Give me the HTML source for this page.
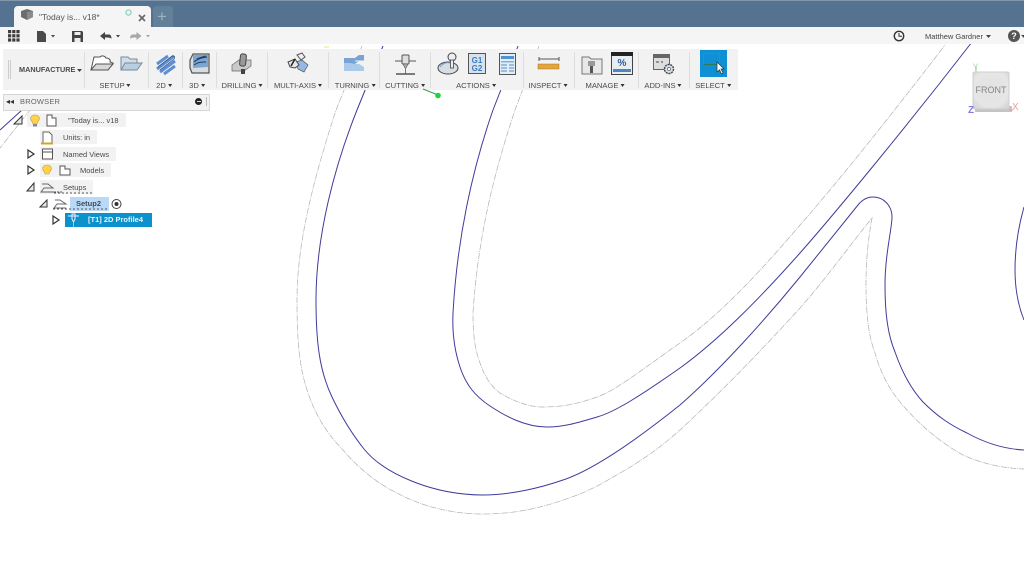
<!DOCTYPE html>
<html><head><meta charset="utf-8"><style>
html,body{margin:0;padding:0;background:#fff;}
#p{position:relative;width:1024px;height:566px;overflow:hidden;background:#fff;font-family:"Liberation Sans",sans-serif;color:#444;filter:blur(.3px);}
.a{position:absolute;}
.t{position:absolute;font-size:8px;line-height:10px;white-space:nowrap;color:#4a4a4a;}
.c{transform:translateX(-50%);font-size:7.6px;}
.c i{display:inline-block;width:0;height:0;border-left:2.2px solid transparent;border-right:2.2px solid transparent;border-top:3px solid #333;margin-left:2px;vertical-align:1.5px;}
.sep{position:absolute;top:52px;width:1px;height:36px;background:#dedede;}
.row{position:absolute;background:#f2f2f2;height:14px;}
svg{position:absolute;overflow:visible;}
</style></head><body><div id="p">

<svg style="left:0;top:0" width="1024" height="566" fill="none">
<g stroke="#3f3c9a" stroke-width="1">
<path d="M383,46 L357,110 C335,165 316,235 316,300 C316,340 319,370 332,397 C342,418 352,434 364,449 C385,475 435,495 483,495 C510,495 540,488 563,480 C590,471 630,445 680,405 C720,370 765,320 800,277 L858,205 C862,200 867,197 873,197 C884,197 892,206 892,217 C892,228 885,255 885,285 C885,315 888,335 895,352 C903,375 912,390 923,402 C937,416 950,425 967,433 C985,443 1005,449 1024,450"/>
<path d="M518,46 L493,110 C472,170 457,240 453,313 C452,335 455,352 460,367 C466,385 475,396 490,406 C505,416 525,427 547,427 C565,427 580,422 597,417 C615,412 640,396 680,368 C720,339 760,298 800,253 C830,219 900,135 972,42"/>
<path d="M1024,207 C1018,228 1015,250 1015,270 C1015,288 1018,305 1024,320"/>
</g>
<g stroke="#b4b4b4" stroke-width="0.75" stroke-dasharray="6 1 1 1">
<path d="M362,46 L336,110 C315,175 297,240 297,300 C297,345 300,368 307,390 C315,415 328,435 343,450 C360,470 380,485 397,493 C425,508 455,514 483,514 C515,514 540,508 563,500 C585,493 600,485 613,477 C640,462 660,448 680,430 C720,393 760,352 800,308 C825,280 850,245 872,218 C868,240 866,260 866,285 C866,310 868,335 875,353 C882,378 893,395 907,410 C925,430 945,445 963,455 C985,465 1005,468 1024,469"/>
<path d="M539,46 L515,110 C495,170 478,235 473,313 C473,340 476,352 480,363 C485,378 492,387 500,393 C515,402 530,407 543,407 C565,407 580,403 597,397 C615,391 640,371 680,343 C720,315 760,272 800,225 C825,197 880,130 945,45"/>
<path d="M30,110 L0,148"/>
</g>
<path d="M22,110 L0,130" stroke="#3f3c9a" stroke-width="1"/>
</svg>

<!-- title bar -->
<div class="a" style="left:0;top:0;width:1024px;height:27px;background:#557290;"></div>
<div class="a" style="left:0;top:0;width:1024px;height:1px;background:#8397ab;"></div>
<div class="a" style="left:153px;top:6px;width:20px;height:21px;background:#638099;border-radius:3px 3px 0 0;"></div>
<div class="t" style="left:157px;top:6px;font-size:17px;line-height:21px;color:#9db0c2;">+</div>
<div class="a" style="left:14px;top:6px;width:137px;height:21px;background:#f5f5f5;border-radius:4px 4px 0 0;"></div>
<svg style="left:20px;top:9px" width="16" height="14"><path d="M1,2 L7,0 L13,2 L13,8 L7,11 L1,8Z" fill="#6d6d6d"/><path d="M7,3 L13,2 L13,8 L7,11Z" fill="#8b8b8b"/></svg>
<div class="t" style="left:39px;top:12px;font-size:8.5px;color:#555;">"Today is... v18*</div>
<svg style="left:125px;top:9px" width="8" height="8"><circle cx="3.500" cy="3.500" r="2.600" fill="none" stroke="#7fc8b4"/></svg>
<svg style="left:138px;top:14px" width="8" height="8"><path d="M1,1 L7,7 M7,1 L1,7" stroke="#666" stroke-width="1.600"/></svg>

<!-- quick access -->
<div class="a" style="left:0;top:27px;width:1024px;height:17px;background:#f5f5f5;"></div>
<svg style="left:8px;top:30px" width="12" height="12" fill="#3d3d3d"><rect x="0" y="0" width="3.200" height="3.200"/><rect x="4.200" y="0" width="3.200" height="3.200"/><rect x="8.400" y="0" width="3.200" height="3.200"/><rect x="0" y="4.200" width="3.200" height="3.200"/><rect x="4.200" y="4.200" width="3.200" height="3.200"/><rect x="8.400" y="4.200" width="3.200" height="3.200"/><rect x="0" y="8.400" width="3.200" height="3.200"/><rect x="4.200" y="8.400" width="3.200" height="3.200"/><rect x="8.400" y="8.400" width="3.200" height="3.200"/></svg>
<svg style="left:37px;top:31px" width="20" height="12" fill="#4a4a4a"><path d="M0,0 H6 L9,3 V11 H0Z"/><path d="M14,4 H18 L16,6.500Z"/></svg>
<svg style="left:72px;top:31px" width="12" height="12"><path d="M0,0 H10 L11,1 V11 H0Z" fill="#444"/><rect x="2.500" y="1" width="6" height="3" fill="#eee"/><rect x="2.500" y="7" width="6" height="4" fill="#eee"/></svg>
<svg style="left:100px;top:32px" width="22" height="10"><path d="M0,4 L5,0 V2.500 H9 C10.500,2.500 11.500,4 11.500,7 C10.500,5.500 9,5.500 5,5.500 V8Z" fill="#444"/><path d="M16,3 H20 L18,5.500Z" fill="#444"/></svg>
<svg style="left:130px;top:32px" width="22" height="10"><path d="M11.500,4 L6.500,0 V2.500 H3 C1,2.500 0,4 0,7 C1,5.500 3,5.500 6.500,5.500 V8Z" fill="#a8a8a8"/><path d="M16,3 H20 L18,5.500Z" fill="#a8a8a8"/></svg>
<svg style="left:893px;top:30px" width="12" height="12" fill="none"><circle cx="6" cy="6" r="4.700" stroke="#333" stroke-width="1.400"/><path d="M6,3 V6.300 H9" stroke="#333"/></svg>
<div class="t" style="left:925px;top:32px;font-size:7.500px;color:#444;">Matthew Gardner</div>
<svg style="left:986px;top:35px" width="6" height="4"><path d="M0,0 H5 L2.500,3Z" fill="#444"/></svg>
<div class="a" style="left:1008px;top:30px;width:12px;height:12px;border-radius:50%;background:#555;color:#fff;font-size:9px;font-weight:bold;line-height:12px;text-align:center;">?</div>
<svg style="left:1021px;top:35px" width="3" height="4"><path d="M0,0 H3 V3Z" fill="#444"/></svg>

<!-- toolbar -->
<div class="a" style="left:3px;top:49px;width:735px;height:41px;background:#f2f2f2;"></div>
<div class="a" style="left:8px;top:60px;width:1px;height:19px;background:#ccc;"></div>
<div class="a" style="left:10px;top:60px;width:1px;height:19px;background:#ccc;"></div>
<div class="t" style="left:19px;top:65px;font-weight:bold;font-size:7.300px;color:#4a4a4a;">MANUFACTURE</div>
<svg style="left:77px;top:69px" width="5" height="4"><path d="M0,0 H5 L2.500,3Z" fill="#444"/></svg>

<div class="sep" style="left:84px"></div><div class="sep" style="left:148px"></div><div class="sep" style="left:182px"></div><div class="sep" style="left:216px"></div><div class="sep" style="left:267px"></div><div class="sep" style="left:328px"></div><div class="sep" style="left:379px"></div><div class="sep" style="left:430px"></div><div class="sep" style="left:523px"></div><div class="sep" style="left:574px"></div><div class="sep" style="left:638px"></div><div class="sep" style="left:689px"></div>

<div class="t c" style="left:115px;top:81px;">SETUP<i></i></div>
<div class="t c" style="left:164px;top:81px;">2D<i></i></div>
<div class="t c" style="left:197px;top:81px;">3D<i></i></div>
<div class="t c" style="left:242px;top:81px;">DRILLING<i></i></div>
<div class="t c" style="left:298px;top:81px;">MULTI-AXIS<i></i></div>
<div class="t c" style="left:355px;top:81px;">TURNING<i></i></div>
<div class="t c" style="left:405px;top:81px;">CUTTING<i></i></div>
<div class="t c" style="left:476px;top:81px;">ACTIONS<i></i></div>
<div class="t c" style="left:548px;top:81px;">INSPECT<i></i></div>
<div class="t c" style="left:605px;top:81px;">MANAGE<i></i></div>
<div class="t c" style="left:663px;top:81px;">ADD-INS<i></i></div>
<div class="t c" style="left:713px;top:81px;">SELECT<i></i></div>

<!-- setup icons -->
<svg style="left:90px;top:55px" width="24" height="17"><path d="M1,15 L4,2 H10 C12,0 15,1 16,3 C19,3 21,5 20,7 L23,8 L18,15Z" fill="#fff" stroke="#555"/><path d="M1,15 L6,9 H23 L18,15Z" fill="#d8d8d8" stroke="#555"/></svg>
<svg style="left:120px;top:56px" width="23" height="15"><path d="M1,14 V1 H8 L10,3 H17 V7" fill="#cfdeea" stroke="#7a8a98"/><path d="M1,14 L5,7 H22 L17,14Z" fill="#b8cfe2" stroke="#7a8a98"/></svg>
<!-- 2D -->
<svg style="left:155px;top:53px" width="22" height="22" fill="none"><path d="M2,11 L13,3 M2,16 L19,3 M5,19 L20,8 M9,21 L20,13" stroke="#5f8fd0" stroke-width="3"/><path d="M3,14 L16,4 C18,2 21,3 19,6 L5,17" stroke="#2c4f80" stroke-width=".7"/></svg>
<!-- 3D -->
<svg style="left:189px;top:53px" width="21" height="21"><path d="M4,1 H20 V20 H3 L1,15 V7Z" fill="#d8dde2" stroke="#555" stroke-width="1.200"/><path d="M4,2 H19 V14 L4,15Z" fill="#7aa6d0"/><path d="M5,9 C9,5 14,5 18,4 M5,12 C9,9 12,9 17,9 M8,6 C10,5 13,4 17,3" stroke="#1d3c6a" fill="none"/></svg>
<!-- drilling -->
<svg style="left:231px;top:53px" width="21" height="21"><path d="M1,12 L8,7 H20 V13 L13,18 H1Z" fill="#c9c9c9" stroke="#666" stroke-width=".7"/><rect x="9" y="1" width="6" height="12" rx="2" fill="#999" stroke="#444" transform="rotate(6 12 7)"/><rect x="10" y="16" width="4" height="5" fill="#444"/></svg>
<!-- multi axis -->
<svg style="left:287px;top:53px" width="22" height="20"><path d="M9,9 L15,7 L21,12 L17,19 L11,16Z" fill="#94b9e4" stroke="#555" stroke-width=".7"/><path d="M1,9 L8,6 L12,12 L8,15 L3,14Z" fill="#e6e6e6" stroke="#444"/><path d="M10,2 L15,0 L18,4 L14,7Z" fill="#eee" stroke="#555"/><path d="M8,6 L4,13" stroke="#222" stroke-width="1.500"/></svg>
<!-- turning -->
<svg style="left:344px;top:55px" width="21" height="16"><path d="M0,3 H11 L15,0 H20 V6 H15 L11,9 H6 L0,12Z" fill="#77a4d4"/><path d="M0,8 H6 L11,9 H15 L20,12 V16 H0Z" fill="#aacaea"/><path d="M11,6 L20,6" stroke="#eee"/></svg>
<!-- cutting -->
<svg style="left:394px;top:53px" width="23" height="23"><path d="M1,8 H22" stroke="#555"/><rect x="8" y="2" width="7" height="9" rx="1" fill="#ddd" stroke="#555"/><path d="M9,11 H14 L12,15 H11Z" fill="#aaa" stroke="#555" stroke-width=".6"/><path d="M11.500,15 V21" stroke="#d8503c"/><path d="M2,21 H21" stroke="#555" stroke-width="1.400"/></svg>
<!-- actions -->
<svg style="left:437px;top:52px" width="22" height="23"><ellipse cx="11" cy="16" rx="10" ry="6" fill="#d7dde5" stroke="#444" stroke-width="1"/><path d="M3,15 C6,11 10,10 13,11" stroke="#7aa0cc" fill="none"/><circle cx="15" cy="5" r="4" fill="#eee" stroke="#444"/><rect x="13.500" y="8" width="3" height="8" fill="#eee" stroke="#444" stroke-width=".8"/></svg>
<svg style="left:468px;top:53px" width="19" height="22"><rect x=".5" y=".5" width="17" height="20" fill="#d8e2ec" stroke="#555"/><text x="9" y="10" font-family="Liberation Sans,sans-serif" font-size="8" font-weight="bold" fill="#3a7bc0" text-anchor="middle">G1</text><text x="9" y="18" font-family="Liberation Sans,sans-serif" font-size="8" font-weight="bold" fill="#3a7bc0" text-anchor="middle">G2</text></svg>
<svg style="left:499px;top:53px" width="18" height="22"><rect x=".5" y=".5" width="16" height="21" fill="#e4edf5" stroke="#555"/><rect x="2" y="3" width="13" height="3" fill="#4e94d4"/><rect x="2" y="8" width="13" height="1.500" fill="#7fb2dd"/><path d="M2,12 H8 M10,12 H15 M2,15 H8 M10,15 H15 M2,18 H8 M10,18 H15" stroke="#6ea2cf" stroke-width="1.200"/></svg>
<!-- inspect -->
<svg style="left:538px;top:57px" width="22" height="14"><path d="M1,2 H21" stroke="#555"/><path d="M1,0 V4 M21,0 V4" stroke="#555"/><rect x="0" y="7" width="21" height="5" fill="#e2a63c" stroke="#a87820" stroke-width=".5"/></svg>
<!-- manage -->
<svg style="left:581px;top:54px" width="22" height="21"><path d="M1,20 V3 H8 L10,5 H21 V20Z" fill="#e8e8e8" stroke="#777"/><rect x="7" y="7" width="7" height="5" fill="#999"/><rect x="9" y="12" width="3" height="7" fill="#555"/></svg>
<svg style="left:611px;top:52px" width="22" height="23"><rect x=".5" y=".5" width="21" height="22" fill="#e8edf2" stroke="#444"/><rect x="0" y="0" width="22" height="4" fill="#222"/><rect x="2" y="17" width="18" height="3" fill="#4d86bf"/><text x="11" y="14" font-family="Liberation Sans,sans-serif" font-size="10" font-weight="bold" fill="#2a5d94" text-anchor="middle">%</text></svg>
<!-- addins -->
<svg style="left:653px;top:54px" width="22" height="21"><rect x=".5" y=".5" width="16" height="15" fill="#dedede" stroke="#666"/><rect x="1" y="1" width="15" height="3" fill="#666"/><path d="M3,8 H6 M8,8 H10" stroke="#444"/><circle cx="16" cy="15" r="4.500" fill="#d6e2ee" stroke="#444" stroke-width="1.400" stroke-dasharray="2 .8"/><circle cx="16" cy="15" r="1.600" fill="#fff" stroke="#444" stroke-width=".6"/></svg>
<!-- select -->
<div class="a" style="left:700px;top:50px;width:27px;height:27px;background:#0f8fd4;"></div>
<div class="a" style="left:703px;top:53px;width:15px;height:10px;border:1px solid #3f9a5c;border-bottom-color:#2d7a55;"></div>
<svg style="left:716px;top:62px" width="9" height="13"><path d="M1,0 V10 L3.500,7.800 L5.500,12 L7,11 L5,7 H8Z" fill="#fff" stroke="#333" stroke-width=".7"/></svg>

<!-- green pivot -->
<svg style="left:420px;top:88px" width="24" height="14"><path d="M3,1 L18,7" stroke="#2fa050"/><circle cx="18" cy="7.500" r="2.800" fill="#1fd23f"/></svg>
<div class="a" style="left:324px;top:46px;width:5px;height:2px;background:#f4f2c0;"></div>

<!-- browser -->
<div class="a" style="left:3px;top:94px;width:205px;height:15px;background:#f2f2f2;border:1px solid #d6d6d6;"></div>
<div class="t" style="left:6px;top:97px;font-size:8px;color:#333;">◂◂</div>
<div class="t" style="left:20px;top:97px;font-size:7.500px;letter-spacing:.2px;color:#666;">BROWSER</div>
<div class="a" style="left:195px;top:98px;width:7px;height:7px;border-radius:50%;background:#222;"></div>
<div class="a" style="left:196.5px;top:101px;width:4px;height:1px;background:#ddd;"></div>
<div class="a" style="left:206px;top:97px;width:1px;height:9px;background:#bbb;"></div>

<div class="row" style="left:27px;top:113px;width:99px;"></div>
<div class="row" style="left:40px;top:130px;width:57px;"></div>
<div class="row" style="left:40px;top:147px;width:76px;"></div>
<div class="row" style="left:40px;top:163px;width:71px;"></div>
<div class="row" style="left:40px;top:180px;width:53px;"></div>
<div class="a" style="left:70px;top:197px;width:39px;height:14px;background:#b9d9f7;"></div>
<div class="a" style="left:65px;top:213px;width:87px;height:14px;background:#0b92cc;"></div>

<svg style="left:0;top:0" width="220" height="235" fill="none">
<g fill="#e8e8e8" stroke="#333" stroke-width="1"><path d="M14,124 L22,116 V124Z"/><path d="M27,191 L34,183 V191Z"/><path d="M40,207 L47,200 V207Z"/></g>
<g fill="#fff" stroke="#333" stroke-width="1.200"><path d="M28,150 L34,154 L28,158Z"/><path d="M28,166 L34,170 L28,174Z"/><path d="M53,216 L59,220 L53,224Z"/></g>
<path d="M35,115 C31,115 30,118 31,120 C32,122 33,122 33,124 H37 C37,122 38,122 39,120 C40,118 39,115 35,115Z" fill="#ffd24a" stroke="#b89a3a" stroke-width=".6"/><rect x="33" y="124" width="4" height="2.500" fill="#888"/>
<path d="M47,115 H52 V118 H56 V126 H47Z" fill="#fff" stroke="#555"/>
<path d="M43,132 H49 L52,135 V143 H43Z" fill="#fff" stroke="#666"/><path d="M41,143.500 H53" stroke="#d8a02a" stroke-width="2"/>
<rect x="42.500" y="149" width="10" height="10" fill="#fff" stroke="#555"/><path d="M42.500,152 H52" stroke="#555"/>
<path d="M47,165 C43,165 42,168 43,170 C44,172 45,172 45,174 H49 C49,172 50,172 51,170 C52,168 51,165 47,165Z" fill="#ffd24a" stroke="#b89a3a" stroke-width=".6"/>
<path d="M60,166 H65 V169 H70 V175 H60Z" fill="#fff" stroke="#555"/>
<path d="M42,184 H48 L53,188 H44 L41,192 H54" stroke="#667" stroke-width="1"/>
<path d="M42,192 H62" stroke="#555" stroke-dasharray="2 1"/><path d="M54,193 H92" stroke="#555" stroke-dasharray="2 2"/>
<path d="M55,200 H60 L66,204 H57 L54,208 H66" stroke="#667" stroke-width="1"/>
<path d="M53,209 H108" stroke="#555" stroke-dasharray="2 2"/>
<circle cx="116.500" cy="204" r="4.500" fill="#fff" stroke="#444"/><circle cx="116.500" cy="204" r="2" fill="#333"/>
<path d="M68,216 H79 M72,214 H75 V219 L73.500,222 L72,219Z" stroke="#eef" stroke-width="1"/><path d="M73.500,221 V227" stroke="#7fe" stroke-width=".7"/>
</svg>
<div class="t" style="left:68px;top:116px;font-size:7.500px;">"Today is... v18</div>
<div class="t" style="left:63px;top:133px;font-size:7.500px;">Units: in</div>
<div class="t" style="left:63px;top:150px;font-size:7.500px;">Named Views</div>
<div class="t" style="left:80px;top:166px;font-size:7.500px;">Models</div>
<div class="t" style="left:63px;top:183px;font-size:7.500px;">Setups</div>
<div class="t" style="left:76px;top:199px;font-size:7.500px;font-weight:bold;color:#3d4a5e;">Setup2</div>
<div class="t" style="left:88px;top:215px;font-size:7.500px;font-weight:bold;color:#e8f5fb;">[T1] 2D Profile4</div>

<!-- viewcube -->
<svg style="left:965px;top:62px" width="59" height="56">
<defs><radialGradient id="g" cx=".5" cy=".45" r=".7"><stop offset="0" stop-color="#e2e2e2"/><stop offset=".7" stop-color="#e6e6e6"/><stop offset="1" stop-color="#d2d2d2"/></radialGradient></defs>
<path d="M11,11 V4" stroke="#a8e0b0" stroke-width="1.500"/>
<text x="10.500" y="8" font-family="Liberation Sans,sans-serif" font-size="9" fill="#a8dcb0" text-anchor="middle">Y</text>
<rect x="10" y="44" width="37" height="6" fill="#c4c4c4"/>
<rect x="8" y="10" width="36" height="37" rx="1.500" fill="url(#g)" stroke="#cfcfcf"/>
<text x="26" y="31" font-family="Liberation Sans,sans-serif" font-size="9" fill="#858585" text-anchor="middle">FRONT</text>
<path d="M44,48 H48" stroke="#f0a0a0"/>
<text x="47" y="48" font-family="Liberation Sans,sans-serif" font-size="10" fill="#ee9a9a">X</text>
<text x="3" y="51" font-family="Liberation Sans,sans-serif" font-size="10" font-weight="bold" fill="#8080e8">Z</text>
</svg>
</div></body></html>
